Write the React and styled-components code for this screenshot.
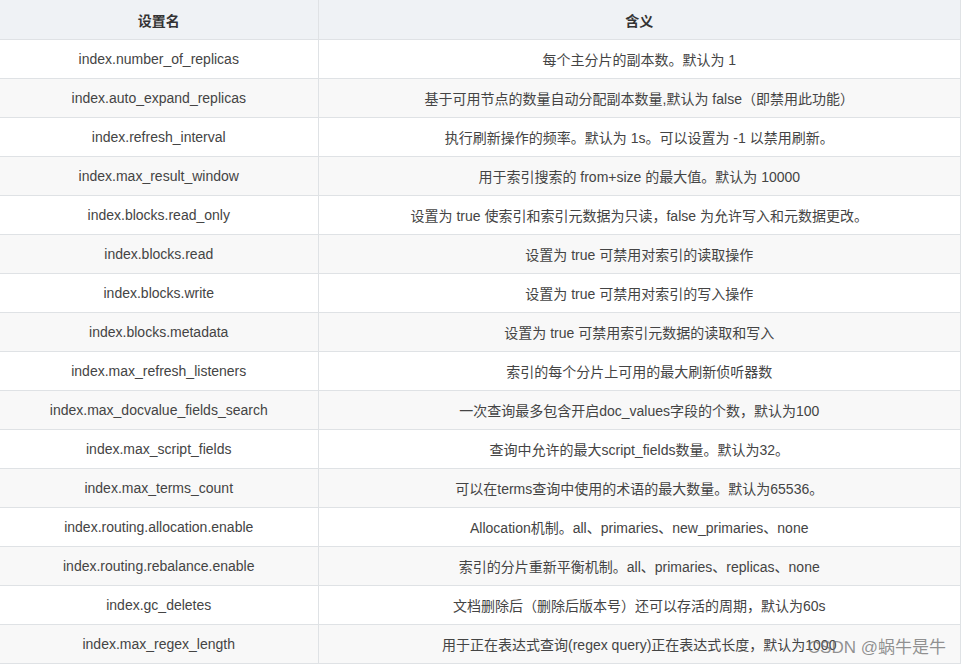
import React from "react";
import styled, { createGlobalStyle } from "styled-components";

const Global = createGlobalStyle`
  body { margin: 0; background: #fff; font-family: "Liberation Sans", "Noto Sans CJK SC", sans-serif; }
`;
const Wrap = styled.div`position: relative; width: 964px; height: 666px; overflow: hidden;`;
const Table = styled.table`
  border-collapse: collapse; width: 961px; table-layout: fixed;
  font-size: 14px; color: #444;
`;
const Th = styled.th`
  background: #eff2f5; height: 39px; border: 1px solid #dfe2e5; border-top: none;
  font-weight: bold; color: #333; text-align: center; padding: 0;
  &:first-child { border-left: none; }
`;
const Tr = styled.tr`background: ${p => (p.$alt ? "#f8f8f8" : "#fff")};`;
const Td = styled.td`
  height: 38px; border: 1px solid #dfe2e5; text-align: center; padding: 0 6px;
  white-space: nowrap;
  &:first-child { border-left: none; }
`;
const Mark = styled.div`
  position: absolute; right: 18px; top: 633px; font-size: 17px;
  color: rgba(110,110,110,0.75); font-family: "Liberation Sans", "Noto Sans CJK SC", sans-serif;
`;

const rows = [
  ["index.number_of_replicas", "每个主分片的副本数。默认为 1"],
  ["index.auto_expand_replicas", "基于可用节点的数量自动分配副本数量,默认为 false（即禁用此功能）"],
  ["index.refresh_interval", "执行刷新操作的频率。默认为 1s。可以设置为 -1 以禁用刷新。"],
  ["index.max_result_window", "用于索引搜索的 from+size 的最大值。默认为 10000"],
  ["index.blocks.read_only", "设置为 true 使索引和索引元数据为只读，false 为允许写入和元数据更改。"],
  ["index.blocks.read", "设置为 true 可禁用对索引的读取操作"],
  ["index.blocks.write", "设置为 true 可禁用对索引的写入操作"],
  ["index.blocks.metadata", "设置为 true 可禁用索引元数据的读取和写入"],
  ["index.max_refresh_listeners", "索引的每个分片上可用的最大刷新侦听器数"],
  ["index.max_docvalue_fields_search", "一次查询最多包含开启doc_values字段的个数，默认为100"],
  ["index.max_script_fields", "查询中允许的最大script_fields数量。默认为32。"],
  ["index.max_terms_count", "可以在terms查询中使用的术语的最大数量。默认为65536。"],
  ["index.routing.allocation.enable", "Allocation机制。all、primaries、new_primaries、none"],
  ["index.routing.rebalance.enable", "索引的分片重新平衡机制。all、primaries、replicas、none"],
  ["index.gc_deletes", "文档删除后（删除后版本号）还可以存活的周期，默认为60s"],
  ["index.max_regex_length", "用于正在表达式查询(regex query)正在表达式长度，默认为1000"],
];

export default function App() {
  return (
    <Wrap>
      <Global />
      <Table>
        <colgroup><col style={{ width: 318 }} /><col /></colgroup>
        <thead><tr><Th>设置名</Th><Th>含义</Th></tr></thead>
        <tbody>
          {rows.map((r, i) => (
            <Tr key={i} $alt={i % 2 === 1}><Td>{r[0]}</Td><Td>{r[1]}</Td></Tr>
          ))}
        </tbody>
      </Table>
      <Mark>CSDN @蜗牛是牛</Mark>
    </Wrap>
  );
}
